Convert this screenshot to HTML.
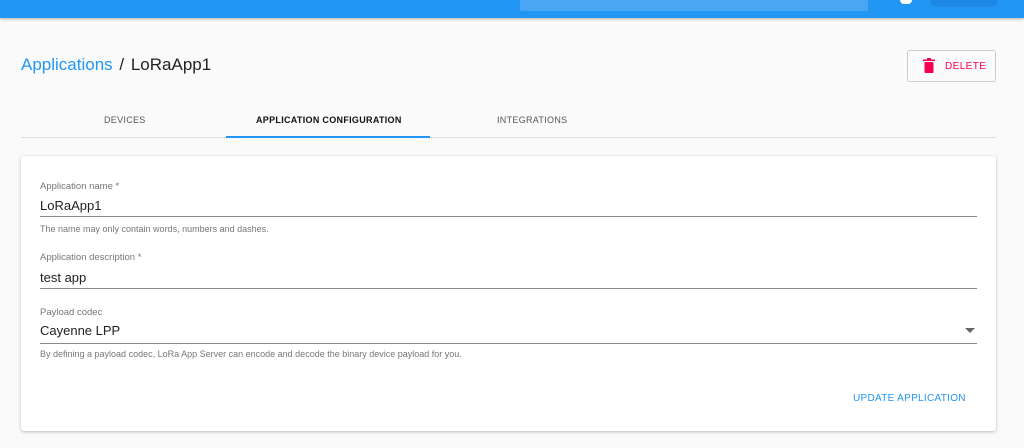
<!DOCTYPE html>
<html><head><style>
*{margin:0;padding:0;box-sizing:border-box}
body{width:1024px;height:448px;background:#fafafa;font-family:"Liberation Sans",sans-serif;position:relative;overflow:hidden}
.a{position:absolute;white-space:nowrap}
.lbl{font-size:9.5px;color:#777}
.val{font-size:13px;color:#222}
.line{position:absolute;height:1px;background:#8a8a8a;left:40px;width:937px}
.help{font-size:9px;color:#777}
</style></head><body>
<div class="a" style="left:0;top:0;width:1024px;height:18px;background:#2196f3;box-shadow:0 1px 3px rgba(0,0,0,.3)"></div>
<div class="a" style="left:520px;top:0;width:348px;height:11px;background:#4aa6f5;border-radius:0 0 2px 2px"></div>
<div class="a" style="left:900px;top:0;width:12px;height:4px;background:#fff;border-radius:0 0 6px 6px"></div>
<div class="a" style="left:930px;top:0;width:68px;height:7px;background:#1e88e5;border-radius:0 0 8px 8px"></div>
<div class="a" style="left:21px;top:55px;font-size:17px;color:#222;word-spacing:2px"><span style="color:#2196f3">Applications</span> / LoRaApp1</div>
<div class="a" style="left:907px;top:50px;width:89px;height:32px;border:1px solid #ccc;border-radius:3px;background:#fafafa"></div>
<svg class="a" style="left:922px;top:58px" width="14" height="16" viewBox="0 0 14 16"><rect x="1" y="1.5" width="12" height="1.5" fill="#f50057"/><rect x="5" y="0" width="4" height="2" fill="#f50057"/><rect x="2.5" y="4" width="9" height="11" rx="1" fill="#f50057"/></svg>
<div class="a" style="left:945px;top:61px;font-size:10px;color:#f50057;letter-spacing:.4px">DELETE</div>
<div class="a" style="left:21px;top:137px;width:975px;height:1px;background:#ddd"></div>
<div class="a" style="left:104px;top:115px;font-size:9px;color:#555;letter-spacing:.3px">DEVICES</div>
<div class="a" style="left:256px;top:115px;font-size:9px;color:#111;letter-spacing:.3px;font-weight:bold">APPLICATION CONFIGURATION</div>
<div class="a" style="left:497px;top:115px;font-size:9px;color:#555;letter-spacing:.3px">INTEGRATIONS</div>
<div class="a" style="left:226px;top:136px;width:204px;height:2px;background:#2196f3"></div>
<div class="a" style="left:21px;top:156px;width:975px;height:275px;background:#fff;border-radius:3px;box-shadow:0 1px 3px rgba(0,0,0,.25)"></div>
<div class="a lbl" style="left:40px;top:181px">Application name *</div>
<div class="a val" style="left:40px;top:198px">LoRaApp1</div>
<div class="line" style="top:216px"></div>
<div class="a help" style="left:40px;top:224px">The name may only contain words, numbers and dashes.</div>
<div class="a lbl" style="left:40px;top:252px">Application description *</div>
<div class="a val" style="left:40px;top:270px">test app</div>
<div class="line" style="top:288px"></div>
<div class="a lbl" style="left:40px;top:307px">Payload codec</div>
<div class="a val" style="left:40px;top:323px">Cayenne LPP</div>
<svg class="a" style="left:965px;top:328px" width="10" height="5"><path d="M0 0h10L5 5z" fill="#666"/></svg>
<div class="line" style="top:343px"></div>
<div class="a help" style="left:40px;top:349px">By defining a payload codec, LoRa App Server can encode and decode the binary device payload for you.</div>
<div class="a" style="left:853px;top:393px;font-size:10px;color:#2196f3;letter-spacing:.3px">UPDATE APPLICATION</div>
</body></html>
